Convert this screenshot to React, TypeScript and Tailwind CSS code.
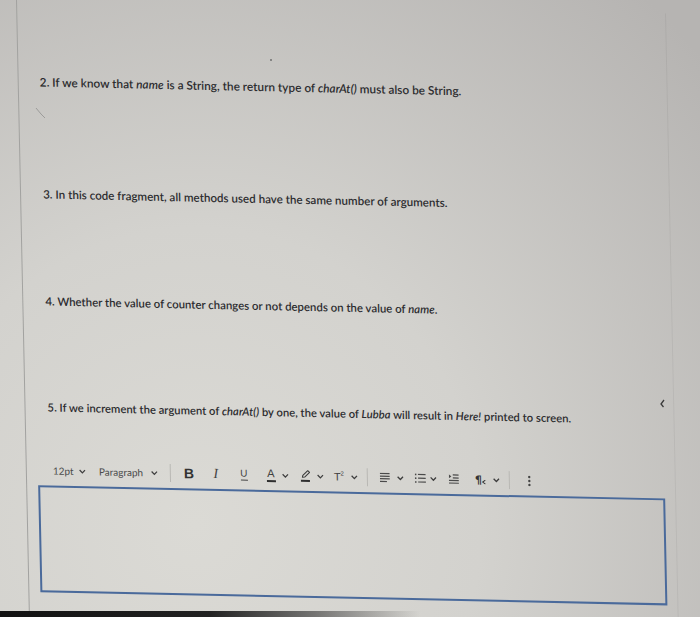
import React from "react";

const Chev = ({ className = "" }: { className?: string }) => (
  <svg width="7" height="5" viewBox="0 0 7 5" className={"shrink-0 " + className}>
    <path d="M0.8 0.9 L3.5 3.7 L6.2 0.9" fill="none" stroke="#3f3f3f" strokeWidth="1.3" />
  </svg>
);

const Sep = ({ className = "" }: { className?: string }) => (
  <div className={"w-px h-[18px] bg-[#b9b8b4] shrink-0 " + className} />
);

export default function App() {
  return (
    <div className="relative w-[700px] h-[617px] overflow-hidden flex flex-col bg-[radial-gradient(ellipse_at_28%_85%,#dbdad5_0%,#d3d2ce_40%,#b6b4b2_95%)] font-['Lato','Noto_Sans',sans-serif]">
      <div className="w-[650px] flex-1 ml-[16px] border-l border-r border-l-[#a2a2a0] border-r-black/5 origin-top-left [transform:skew(1.2deg,1.2deg)] flex flex-col text-[#2c2c2f]">
        <p className="mt-[75px] pl-[21px] text-[11.8px] leading-[14px] font-semibold whitespace-nowrap">
          2. If we know that <i>name</i> is a String, the return type of <i>charAt()</i> must also be String.
        </p>
        <p className="mt-[98px] pl-[22px] text-[11.6px] leading-[14px] font-semibold whitespace-nowrap">
          3. In this code fragment, all methods used have the same number of arguments.
        </p>
        <p className="mt-[93px] pl-[22px] text-[11.4px] leading-[14px] font-semibold whitespace-nowrap">
          4. Whether the value of counter changes or not depends on the value of <i>name</i>.
        </p>
        <p className="mt-[92px] pl-[22px] text-[11.25px] leading-[14px] font-semibold whitespace-nowrap">
          5. If we increment the argument of <i>charAt()</i> by one, the value of <i>Lubba</i> will result in <i>Here!</i> printed to screen.
        </p>

        {/* toolbar */}
        <div className="mt-[46px] pl-[26px] h-[20px] flex items-center text-[#4a4a4a]">
          <span className="text-[10px] leading-none w-[20px] whitespace-nowrap">12pt</span>
          <Chev className="ml-[6px]" />
          <span className="ml-[13px] text-[10px] leading-none w-[45px] whitespace-nowrap">Paragraph</span>
          <Chev className="ml-[7px]" />
          <Sep className="ml-[12px]" />
          <span className="ml-[13px] w-[10px] text-[14px] leading-none font-bold text-[#333] font-['Liberation_Sans',sans-serif] text-center">B</span>
          <span className="ml-[18px] w-[8px] text-[14px] leading-none italic text-[#444] font-['Liberation_Serif',serif] text-center">I</span>
          <span className="ml-[20px] w-[8px] flex flex-col items-center">
            <span className="text-[10px] leading-none text-[#444] font-['Liberation_Sans',sans-serif]">U</span>
            <span className="w-[7px] h-px bg-[#444] mt-[1px]" />
          </span>
          <span className="ml-[18px] w-[10px] flex flex-col items-center">
            <span className="text-[11px] leading-none text-[#3c3c3c] font-['Liberation_Sans',sans-serif]">A</span>
            <span className="w-[9px] h-[2px] bg-[#2f2f2f] mt-[1px]" />
          </span>
          <Chev className="ml-[6px]" />
          <span className="ml-[11px] w-[11px] flex flex-col items-center">
            <svg width="10" height="9" viewBox="0 0 10 9">
              <path d="M1.5 7.5 L2 5.5 L7 0.8 L8.8 2.5 L3.8 7.2 Z" fill="none" stroke="#3c3c3c" strokeWidth="1.1" strokeLinejoin="round" />
            </svg>
            <span className="w-[9px] h-[2px] bg-[#2f2f2f] mt-[1px]" />
          </span>
          <Chev className="ml-[6px]" />
          <span className="ml-[10px] w-[12px] flex items-start text-[#444] font-['Liberation_Sans',sans-serif]">
            <span className="text-[11px] leading-none">T</span>
            <span className="text-[6px] leading-none -mt-[1px]">2</span>
          </span>
          <Chev className="ml-[5px]" />
          <Sep className="ml-[9px]" />
          <svg width="10" height="10" viewBox="0 0 10 10" className="ml-[12px] shrink-0">
            <g stroke="#4a4a4a" strokeWidth="1.2">
              <path d="M0 1 H10" />
              <path d="M0 3.7 H10" />
              <path d="M0 6.3 H10" />
              <path d="M0 9 H7" />
            </g>
          </svg>
          <Chev className="ml-[7px]" />
          <svg width="11" height="10" viewBox="0 0 11 10" className="ml-[11px] shrink-0">
            <g fill="#4a4a4a">
              <rect x="0" y="0.4" width="1.6" height="1.6" />
              <rect x="0" y="4.2" width="1.6" height="1.6" />
              <rect x="0" y="8" width="1.6" height="1.6" />
            </g>
            <g stroke="#4a4a4a" strokeWidth="1.2">
              <path d="M3.2 1.2 H11" />
              <path d="M3.2 5 H11" />
              <path d="M3.2 8.8 H11" />
            </g>
          </svg>
          <Chev className="ml-[4px]" />
          <svg width="10" height="10" viewBox="0 0 10 10" className="ml-[12px] shrink-0">
            <g stroke="#4a4a4a" strokeWidth="1.2">
              <path d="M4 1 H10" />
              <path d="M4 4 H10" />
              <path d="M0 6.6 H10" />
              <path d="M0 9.2 H10" />
            </g>
            <path d="M0 0.5 L2.6 2.5 L0 4.5 Z" fill="#4a4a4a" />
          </svg>
          <span className="ml-[16px] w-[12px] flex items-end text-[#333] font-['DejaVu_Sans',sans-serif]">
            <span className="text-[11px] leading-none font-bold">¶</span>
            <svg width="4" height="5" viewBox="0 0 4 5" className="mb-[1px]">
              <path d="M3.5 0.5 L0.8 2.5 L3.5 4.5" fill="none" stroke="#333" strokeWidth="1" />
            </svg>
          </span>
          <Chev className="ml-[6px]" />
          <Sep className="ml-[9px]" />
          <svg width="3" height="11" viewBox="0 0 3 11" className="ml-[18px] shrink-0">
            <g fill="#444">
              <circle cx="1.5" cy="1.5" r="1.2" />
              <circle cx="1.5" cy="5.5" r="1.2" />
              <circle cx="1.5" cy="9.5" r="1.2" />
            </g>
          </svg>
        </div>

        {/* text area */}
        <div className="mt-[5px] ml-[11px] w-[627px] h-[107px] border-2 border-[#4a6a9b]" />
      </div>
      <div className="h-[6px] shrink-0 bg-[linear-gradient(90deg,#121212_0%,#222_30%,rgba(50,50,50,0.6)_45%,rgba(80,80,80,0)_60%)]" />

      {/* small marks on the photographed screen */}
      <div className="absolute left-[270px] top-[59px] w-[2px] h-[2px] rounded-full bg-[#6f6f6f]" />
      <svg className="absolute left-[34px] top-[106px]" width="16" height="16" viewBox="0 0 16 16">
        <path d="M2 2 L7 8 L11 12" fill="none" stroke="#9c9c9a" strokeWidth="1" />
      </svg>
      <svg className="absolute left-[657px] top-[398px]" width="10" height="12" viewBox="0 0 10 12">
        <path d="M7 2 L4 6 L6.5 9" fill="none" stroke="#3a3a3a" strokeWidth="1.3" />
      </svg>
    </div>
  );
}
